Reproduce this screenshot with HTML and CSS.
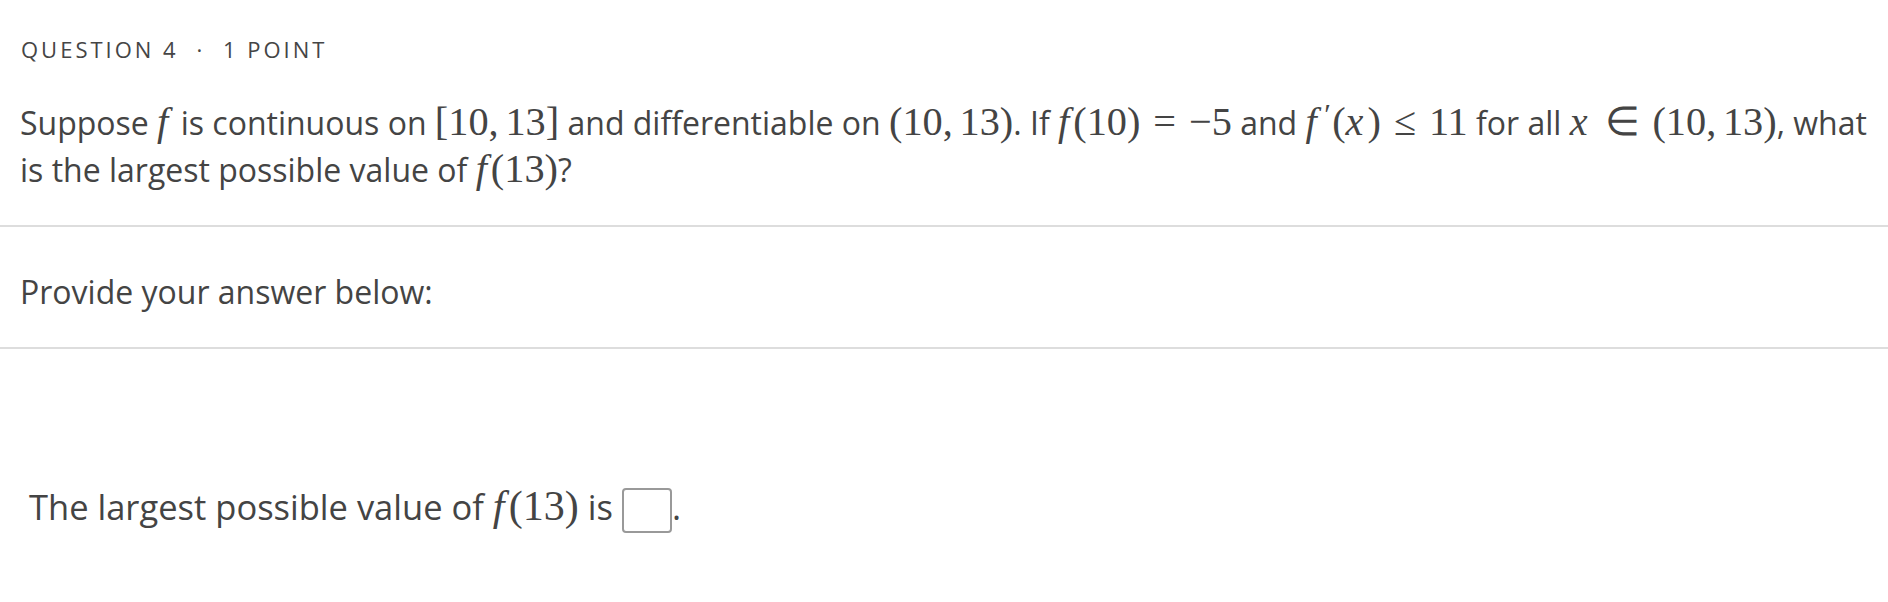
FILE: index.html
```html
<!DOCTYPE html>
<html>
<head>
<meta charset="utf-8">
<link rel="stylesheet" href="styles.css">
</head>
<body>
<div class="page">
  <div class="header">Question 4 <span class="dot">·</span> 1 point</div>
  <div class="question">
    <p class="qtext">Suppose <span class="m"><i>f</i></span> is continuous on <span class="m">[10,<span class="thin"></span>13]</span> and differentiable on <span class="m">(10,<span class="thin"></span>13)</span>. If <span class="m"><i>f</i>(10)<span class="rel">=</span>−5</span> and <span class="m"><i>f</i><span class="prime">′</span>(<i>x</i>)<span class="rel">≤</span>11</span> for all <span class="m"><i>x</i><span class="rel">∈</span>(10,<span class="thin"></span>13)</span>, what is the largest possible value of <span class="m"><i>f</i>(13)</span>?</p>
  </div>
  <div class="prompt">Provide your answer below:</div>
  <div class="answer">
    <p class="aline">The largest possible value of <span class="m"><i>f</i>(13)</span> is <span class="box"></span>.</p>
  </div>
</div>
</body>
</html>
```

FILE: styles.css
```css
html, body {
  margin: 0;
  padding: 0;
  background: #ffffff;
}

body {
  font-family: "Open Sans", "Liberation Sans", sans-serif;
  color: #444444;
}

.page {
  width: 1888px;
  height: 602px;
  overflow: hidden;
}

.header {
  padding: 34px 0 0 21px;
  font-size: 22px;
  line-height: 30px;
  letter-spacing: 3px;
  text-transform: uppercase;
  color: #454545;
}

.dot {
  margin: 0 9px;
}

.question {
  padding: 35px 14px 0 20px;
  border-bottom: 2px solid #dddddd;
}

.qtext {
  margin: 0;
  padding-bottom: 32px;
  font-size: 32px;
  line-height: 47px;
}

.m {
  font-family: "Liberation Serif", "Times New Roman", serif;
  font-size: 1.26em;
  line-height: 1;
  white-space: nowrap;
}

.m i {
  font-style: italic;
  padding-right: 0.1em;
}

.thin {
  display: inline-block;
  width: 0.1667em;
}

.rel {
  padding: 0 0.32em;
}

.prime {
  font-size: 0.75em;
  position: relative;
  top: -0.35em;
  padding-left: 0.12em;
  padding-right: 0.04em;
}

.prompt {
  padding: 41px 20px 32px 20px;
  font-size: 32px;
  line-height: 47px;
  border-bottom: 2px solid #dddddd;
}

.answer {
  padding: 133px 20px 0 29px;
}

.aline {
  margin: 0;
  font-size: 34.5px;
  line-height: 50px;
}

.aline .m {
  font-size: 1.22em;
}

.box {
  display: inline-block;
  width: 46px;
  height: 41px;
  border: 2px solid #999999;
  border-radius: 4px;
  vertical-align: -13px;
  margin-left: 0;
}
```
